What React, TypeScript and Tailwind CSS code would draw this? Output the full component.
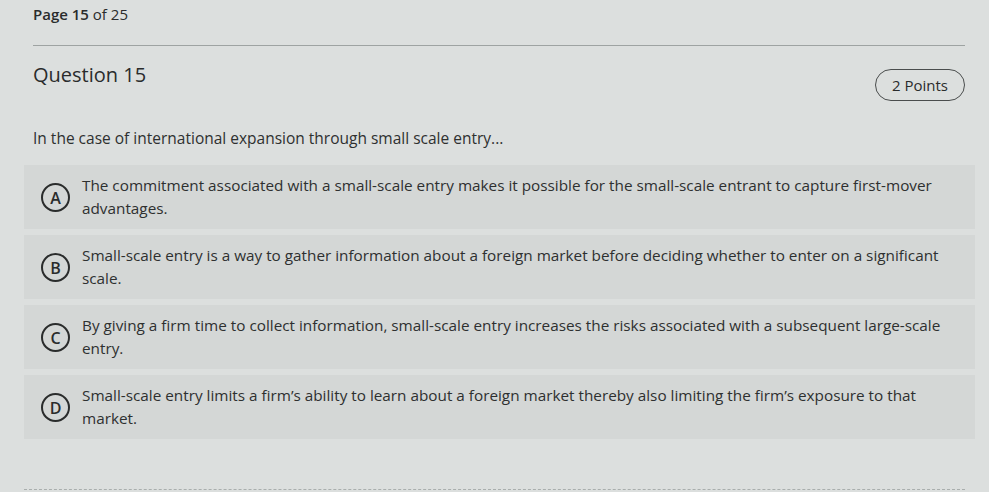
import React from "react"

const OPTIONS = [
  {
    key: "A",
    text: "The commitment associated with a small-scale entry makes it possible for the small-scale entrant to capture first-mover advantages.",
  },
  {
    key: "B",
    text: "Small-scale entry is a way to gather information about a foreign market before deciding whether to enter on a significant scale.",
  },
  {
    key: "C",
    text: "By giving a firm time to collect information, small-scale entry increases the risks associated with a subsequent large-scale entry.",
  },
  {
    key: "D",
    text: "Small-scale entry limits a firm\u2019s ability to learn about a foreign market thereby also limiting the firm\u2019s exposure to that market.",
  },
]

export default function App() {
  return (
    <div
      className="w-[989px] h-[492px] overflow-hidden bg-[#dcdfde] text-[#2e3030]"
      style={{ fontFamily: '"Open Sans", "Noto Sans", sans-serif' }}
    >
      <div className="pl-[33px] pr-[24px] pt-[3px]">
        {/* page counter */}
        <div className="text-[15px] leading-[22px] text-[#2a2c2c]">
          <span className="font-semibold">Page 15</span> of 25
        </div>
        <div className="mt-[20px] h-px bg-[#9ea3a2]" />

        {/* question header */}
        <div className="mt-[16px] flex items-start justify-between">
          <h2 className="text-[20px] leading-[26px] font-medium text-[#2a2c2c]">Question 15</h2>
          <div className="mt-[7px] rounded-full border-[1.5px] border-[#4a4d4d] px-[16px] py-[5px] text-[15px] leading-[20px] text-[#2a2c2c]">
            2 Points
          </div>
        </div>
        <p className="mt-[26px] text-[15.5px] leading-[22px]">
          In the case of international expansion through small scale entry...
        </p>
      </div>

      {/* answer options */}
      <div className="mt-[16px] ml-[24px] mr-[14px] flex flex-col gap-[6px]">
        {OPTIONS.map((o) => (
          <div key={o.key} className="flex items-center bg-[#d4d7d6] pl-[17px] pr-[8px] py-[9px]">
            <span className="block h-[29px] w-[29px] shrink-0 rounded-full border-2 border-[#2a2c2c] text-center text-[16px] font-semibold leading-[26px] text-[#2a2c2c]">
              {o.key}
            </span>
            <p className="ml-[12px] text-[15.3px] leading-[23px]">{o.text}</p>
          </div>
        ))}
      </div>

      <div className="mt-[50px] mx-[24px] border-t border-dashed border-[#a9aead]" />
    </div>
  )
}
